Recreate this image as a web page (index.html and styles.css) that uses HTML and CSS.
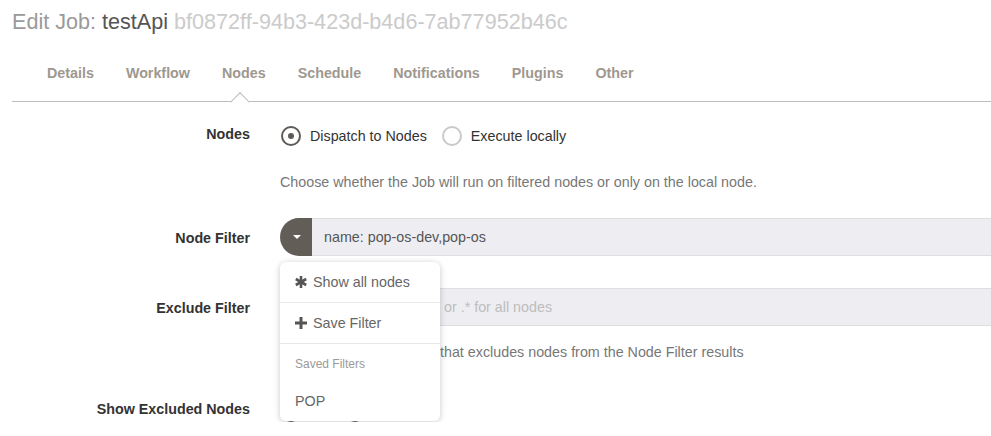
FILE: index.html
```html
<!DOCTYPE html>
<html>
<head>
<meta charset="utf-8">
<link rel="stylesheet" href="styles.css">
</head>
<body>
<div class="page">
  <h1 class="title"><span class="t-lbl">Edit Job:</span> <span class="t-name">testApi</span> <span class="t-id">bf0872ff-94b3-423d-b4d6-7ab77952b46c</span></h1>
  <ul class="tabs">
    <li class="tab">Details</li>
    <li class="tab">Workflow</li>
    <li class="tab active">Nodes</li>
    <li class="tab">Schedule</li>
    <li class="tab">Notifications</li>
    <li class="tab">Plugins</li>
    <li class="tab">Other</li>
  </ul>

  <div class="form">
    <div class="row row-nodes">
      <label class="lbl lbl-nodes">Nodes</label>
      <div class="ctl">
        <div class="radios">
          <span class="radio checked"></span><span class="rtext">Dispatch to Nodes</span>
          <span class="radio"></span><span class="rtext">Execute locally</span>
        </div>
        <p class="help help-nodes">Choose whether the Job will run on filtered nodes or only on the local node.</p>
      </div>
    </div>

    <div class="row row-filter">
      <label class="lbl lbl-input">Node Filter</label>
      <div class="ctl ctl-filter">
        <div class="igroup">
          <span class="toggle"><span class="caret"></span></span>
          <span class="input">name: pop-os-dev,pop-os</span>
        </div>
        <div class="menu">
          <div class="item"><svg class="ico" width="12" height="12" viewBox="0 0 12 12"><g stroke="#555" stroke-width="2.6" stroke-linecap="butt"><line x1="6" y1="0" x2="6" y2="12"/><line x1="0.8" y1="3" x2="11.2" y2="9"/><line x1="0.8" y1="9" x2="11.2" y2="3"/></g></svg>Show all nodes</div>
          <div class="divider"></div>
          <div class="item"><svg class="ico" width="12" height="12" viewBox="0 0 12 12"><g stroke="#555" stroke-width="3"><line x1="6" y1="0" x2="6" y2="12"/><line x1="0" y1="6" x2="12" y2="6"/></g></svg>Save Filter</div>
          <div class="divider"></div>
          <div class="header">Saved Filters</div>
          <div class="item item-pop">POP</div>
        </div>
      </div>
    </div>

    <div class="row row-exclude">
      <label class="lbl lbl-input">Exclude Filter</label>
      <div class="ctl">
        <div class="igroup">
          <span class="input placeholder">or .* for all nodes</span>
        </div>
        <p class="help help-exclude">that excludes nodes from the Node Filter results</p>
      </div>
    </div>

    <div class="row row-show">
      <label class="lbl">Show Excluded Nodes</label>
      <div class="ctl">
        <div class="radios radios-show">
          <span class="radio checked"></span>
          <span class="radio radio-second"></span>
        </div>
      </div>
    </div>
  </div>
</div>
</body>
</html>
```

FILE: styles.css
```css
html, body {
  margin: 0;
  padding: 0;
  background: #fff;
  overflow: hidden;
}
body {
  font-family: "Liberation Sans", Arial, sans-serif;
  font-size: 14.3px;
  color: #333;
}
.page {
  padding: 10px 0 0 12px;
}
.title {
  margin: 0;
  font-size: 21.6px;
  line-height: 24px;
  font-weight: normal;
  white-space: nowrap;
}
.t-lbl { color: #9a9a9a; }
.t-name { color: #555; }
.t-id { color: #cbcbcb; }

.tabs {
  list-style: none;
  margin: 19px 0 0 0;
  padding: 0 0 0 19px;
  display: flex;
  border-bottom: 1px solid #bcbcbc;
}
.tab {
  position: relative;
  padding: 10px 16px 18px;
  line-height: 20px;
  font-weight: bold;
  color: #9e988f;
}
.tab.active::after {
  content: "";
  position: absolute;
  left: 50%;
  bottom: -8px;
  width: 14px;
  height: 14px;
  margin-left: -11px;
  background: #fff;
  border-top: 1px solid #bcbcbc;
  border-left: 1px solid #bcbcbc;
  transform: rotate(45deg);
  box-sizing: border-box;
}

.form {
  display: flex;
  flex-direction: column;
}
.row {
  display: grid;
  grid-template-columns: 238px 1fr;
  column-gap: 30px;
  align-items: start;
}
.lbl {
  text-align: right;
  font-weight: bold;
  line-height: 20px;
  color: #333;
}
.row-nodes { margin-top: 14px; }
.lbl-nodes { padding-top: 8px; }
.radios {
  display: flex;
  align-items: center;
  height: 20px;
  margin-top: 10px;
}
.radio {
  width: 20px;
  height: 20px;
  box-sizing: border-box;
  border-radius: 50%;
  border: 2px solid #c9c9c9;
  margin-left: 1px;
  margin-right: 9px;
  position: relative;
  flex: none;
}
.radio.checked {
  border-color: #5f5a55;
}
.radio.checked::after {
  content: "";
  position: absolute;
  left: 5px;
  top: 5px;
  width: 6px;
  height: 6px;
  border-radius: 50%;
  background: #5f5a55;
}
.radio-second { margin-left: 35px; border-color: #5f5a55; }
.rtext {
  line-height: 20px;
  color: #333;
  margin-right: 14px;
}
.help {
  margin: 0;
  line-height: 20px;
  color: #777;
}
.help-nodes { margin-top: 26px; }

.row-filter { margin-top: 26px; }
.lbl-input { padding-top: 10px; }
.ctl-filter { position: relative; }
.igroup {
  display: flex;
  height: 38px;
}
.toggle {
  flex: none;
  width: 32px;
  height: 38px;
  background: #625d57;
  border-radius: 19px 0 0 19px;
  display: flex;
  align-items: center;
  justify-content: center;
  padding-left: 2px;
  box-sizing: border-box;
}
.caret {
  width: 0;
  height: 0;
  border-left: 4px solid transparent;
  border-right: 4px solid transparent;
  border-top: 4px solid #fff;
}
.input {
  flex: 1;
  box-sizing: border-box;
  height: 38px;
  background: #eeedf2;
  border-top: 1px solid #dedede;
  border-bottom: 1px solid #dedede;
  padding: 0 12px;
  line-height: 36px;
  color: #555;
  white-space: nowrap;
}
.placeholder { color: #bdbdbd; padding-left: 164px; }

.menu {
  position: absolute;
  left: 0;
  top: 44px;
  width: 160px;
  background: #fff;
  border-radius: 6px;
  box-shadow: 0 1px 6px rgba(0, 0, 0, 0.22);
  z-index: 5;
}
.item {
  display: flex;
  align-items: center;
  padding: 10px 15px;
  line-height: 20px;
  color: #666;
}
.ico {
  flex: none;
  margin-right: 6px;
}
.divider {
  height: 1px;
  background: #e8e8e8;
}
.header {
  padding: 11px 15px 9px;
  font-size: 12px;
  line-height: 18px;
  color: #9a9a9a;
}
.item-pop { padding-top: 9px; padding-bottom: 10px; }

.row-exclude { margin-top: 32px; }
.help-exclude { margin-top: 16px; padding-left: 160px; }

.row-show { margin-top: 37px; }
.radios-show { margin-top: 3px; }
```
